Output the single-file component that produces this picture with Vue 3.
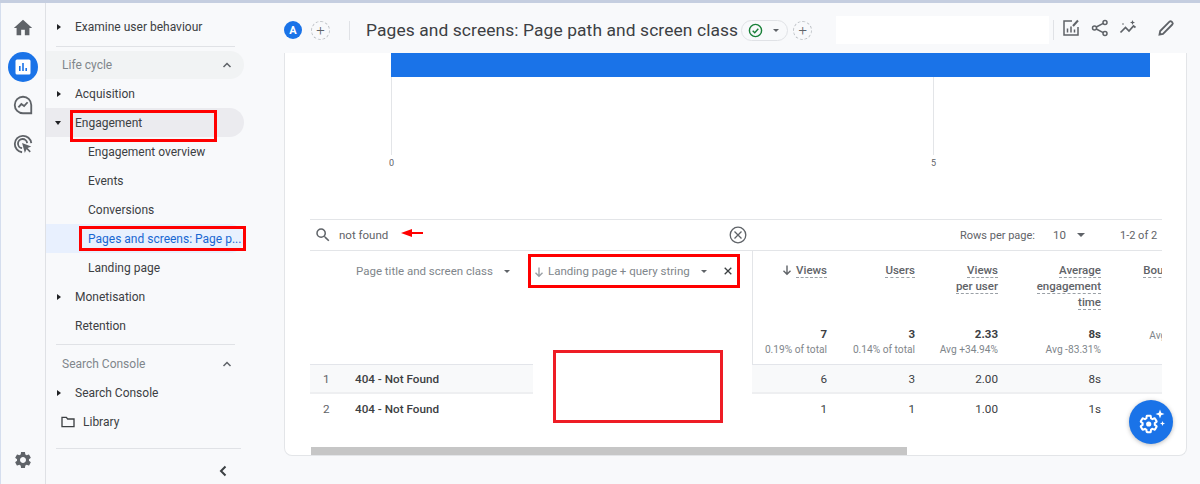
<script setup>
const menu = [
  { label: 'Acquisition', caret: 'right' },
  { label: 'Engagement', caret: 'down', open: true },
  { label: 'Engagement overview', sub: true },
  { label: 'Events', sub: true },
  { label: 'Conversions', sub: true },
  { label: 'Pages and screens: Page p...', sub: true, active: true },
  { label: 'Landing page', sub: true },
  { label: 'Monetisation', caret: 'right' },
  { label: 'Retention' }
]

const metrics = [
  { lines: ['Views'], sorted: true, total: '7', note: '0.19% of total' },
  { lines: ['Users'], total: '3', note: '0.14% of total' },
  { lines: ['Views', 'per user'], total: '2.33', note: 'Avg +34.94%' },
  { lines: ['Average', 'engagement', 'time'], total: '8s', note: 'Avg -83.31%' },
  { lines: ['Bounce'], total: '', note: 'Avg 0%' }
]

const rows = [
  { rank: 1, title: '404 - Not Found', values: ['6', '3', '2.00', '8s', ''] },
  { rank: 2, title: '404 - Not Found', values: ['1', '1', '1.00', '1s', ''] }
]

const gear = 'M19.14 12.94c.04-.3.06-.61.06-.94 0-.32-.02-.64-.07-.94l2.03-1.58c.18-.14.23-.41.12-.61l-1.92-3.32c-.12-.22-.37-.29-.59-.22l-2.39.96c-.5-.38-1.03-.7-1.62-.94l-.36-2.54c-.04-.24-.24-.41-.48-.41h-3.84c-.24 0-.43.17-.47.41l-.36 2.54c-.59.24-1.13.57-1.62.94l-2.39-.96c-.22-.08-.47 0-.59.22L2.74 8.87c-.12.21-.08.47.12.61l2.03 1.58c-.05.3-.09.63-.09.94s.02.64.07.94l-2.03 1.58c-.18.14-.23.41-.12.61l1.92 3.32c.12.22.37.29.59.22l2.39-.96c.5.38 1.03.7 1.62.94l.36 2.54c.05.24.24.41.48.41h3.84c.24 0 .44-.17.47-.41l.36-2.54c.59-.24 1.13-.56 1.62-.94l2.39.96c.22.08.47 0 .59-.22l1.92-3.32c.12-.22.07-.47-.12-.61l-2.01-1.58z'
</script>

<template>
  <div class="page">
    <div class="top-strip"></div>
    <div class="body">
      <aside class="rail">
        <svg class="rail-icon" viewBox="0 0 24 24"><path d="M10 20v-6h4v6h5v-8h3L12 3 2 12h3v8z" fill="#5f6368" /></svg>
        <div class="rail-active">
          <svg width="18" height="18" viewBox="0 0 18 18">
            <rect x="1.5" y="1.5" width="15" height="15" rx="1.5" fill="#fff" />
            <path d="M5 8h1.6v5H5zM8.2 5h1.6v8H8.2zM11.4 10H13v3h-1.6z" fill="#1a73e8" />
          </svg>
        </div>
        <svg class="rail-icon" viewBox="0 0 24 24" fill="none" stroke="#5f6368" stroke-width="2">
          <path d="M21 21h-9a9 9 0 1 1 9-9z" />
          <path d="M7 14.500l3.200-3.500 3 2.200L17 9" />
        </svg>
        <svg class="rail-icon" viewBox="0 0 24 24" fill="none" stroke="#5f6368" stroke-width="2">
          <path d="M11 21a9 9 0 1 1 10-10" />
          <path d="M11 16.500a5 5 0 1 1 5.500-5.500" />
          <path d="M11 11l10 3.600-4 1.800 3.500 3.600-1.200 1.200-3.500-3.500-1.800 4z" fill="#5f6368" stroke="none" />
        </svg>
        <svg class="rail-gear" viewBox="0 0 24 24"><path :d="gear + 'M12 15.6c-1.98 0-3.6-1.62-3.6-3.6s1.62-3.6 3.6-3.6 3.6 1.62 3.6 3.6-1.62 3.6-3.6 3.6z'" fill="#5f6368" fill-rule="evenodd" /></svg>
      </aside>

      <nav class="sidebar">
        <div class="item first"><span class="caret-right"></span><span>Examine user behaviour</span></div>
        <div class="rule"></div>
        <div class="section shaded">
          <span>Life cycle</span>
          <svg width="12" height="12" viewBox="0 0 12 12" fill="none" stroke="#5f6368" stroke-width="1.500"><path d="M2.500 8L6 4.500 9.500 8" /></svg>
        </div>
        <div
          v-for="m in menu"
          :key="m.label"
          class="item"
          :class="{ sub: m.sub, open: m.open, active: m.active }"
        >
          <span v-if="m.caret === 'right'" class="caret-right"></span>
          <span v-else-if="m.caret === 'down'" class="caret-down"></span>
          <span>{{ m.label }}</span>
        </div>
        <div class="rule lower"></div>
        <div class="section">
          <span>Search Console</span>
          <svg width="12" height="12" viewBox="0 0 12 12" fill="none" stroke="#5f6368" stroke-width="1.500"><path d="M2.500 8L6 4.500 9.500 8" /></svg>
        </div>
        <div class="item"><span class="caret-right"></span><span>Search Console</span></div>
        <div class="item library">
          <svg width="16" height="16" viewBox="0 0 24 24" fill="none" stroke="#3c4043" stroke-width="2"><path d="M3 5h6.500l2 2.500H21V19H3z" /></svg>
          <span>Library</span>
        </div>
        <div class="rule last"></div>
        <div class="collapse">
          <svg width="12" height="12" viewBox="0 0 12 12" fill="none" stroke="#3c4043" stroke-width="2"><path d="M8.500 1.500L4 6l4.500 4.500" /></svg>
        </div>
      </nav>

      <main class="main">
        <header class="header">
          <span class="avatar">A</span>
          <span class="add">+</span>
          <span class="sep"></span>
          <h1 class="title">Pages and screens: Page path and screen class</h1>
          <span class="chip">
            <svg width="15" height="15" viewBox="0 0 16 16" fill="none" stroke="#188038" stroke-width="1.500">
              <circle cx="8" cy="8" r="6.500" />
              <path d="M5 8.200l2.200 2.200L11 6.200" />
            </svg>
            <span class="mini-caret"></span>
          </span>
          <span class="add second">+</span>
          <span class="blank"></span>
          <span class="sep tight"></span>
          <div class="tools">
            <svg width="20" height="20" viewBox="0 0 20 20" fill="none" stroke="#5f6368" stroke-width="1.500">
              <path d="M11 3H3v14h14V9" />
              <path d="M6.500 14.500v-4M10 14.500v-6M13.500 14.500v-3" />
              <path d="M12 8l5-5.500" stroke-width="2" />
            </svg>
            <svg width="18" height="18" viewBox="0 0 18 18" fill="none" stroke="#5f6368" stroke-width="1.500">
              <circle cx="14" cy="3.500" r="2" />
              <circle cx="3.500" cy="9" r="2" />
              <circle cx="14" cy="14.500" r="2" />
              <path d="M5.300 8l6.900-3.600M5.300 10l6.900 3.600" />
            </svg>
            <svg width="20" height="20" viewBox="0 0 20 20" fill="none" stroke="#5f6368" stroke-width="1.700">
              <path d="M1.500 14.500l5-5 3.500 3.500 4.500-5 2 1.500" />
              <path d="M13.500 2l.7 1.800 1.800.7-1.800.7-.7 1.800-.7-1.800-1.800-.7 1.800-.7z" fill="#5f6368" stroke="none" />
              <circle cx="4" cy="6" r=".8" fill="#5f6368" stroke="none" />
            </svg>
            <svg class="pencil" width="18" height="18" viewBox="0 0 18 18" fill="none" stroke="#5f6368" stroke-width="1.800">
              <path d="M2.500 15.500l.7-3.500L12.500 2.700a1.500 1.500 0 0 1 2.100 0l.7.7a1.500 1.500 0 0 1 0 2.100L6 14.800z" />
            </svg>
          </div>
        </header>

        <section class="card">
          <div class="chart">
            <div class="bar"></div>
            <div class="ticks">
              <div class="tick wide"><span>0</span></div>
              <div class="tick"><span>5</span></div>
            </div>
          </div>

          <div class="search-bar">
            <svg width="18" height="18" viewBox="0 0 24 24"><path d="M15.500 14h-.79l-.28-.27A6.470 6.470 0 0 0 16 9.500 6.500 6.500 0 1 0 9.500 16c1.610 0 3.090-.59 4.230-1.570l.27.28v.79l5 4.990L20.490 19l-4.990-5zm-6 0C7.010 14 5 11.990 5 9.500S7.010 5 9.500 5 14 7.010 14 9.500 11.990 14 9.500 14z" fill="#5f6368" /></svg>
            <span class="query">not found</span>
            <svg class="clear" width="18" height="18" viewBox="0 0 18 18" fill="none" stroke="#5f6368" stroke-width="1.300">
              <circle cx="9" cy="9" r="7.800" />
              <path d="M5.500 5.500l7 7M12.500 5.500l-7 7" />
            </svg>
            <span class="rows-label">Rows per page:</span>
            <span class="rows-count">10</span>
            <span class="mini-caret wide-caret"></span>
            <span class="range">1-2 of 2</span>
          </div>

          <div class="table">
            <div class="grid head">
              <div></div>
              <div class="dim-head"><span>Page title and screen class</span><span class="mini-caret"></span></div>
              <div class="dim-head second-dim">
                <svg class="down-arrow" width="12" height="12" viewBox="0 0 12 12" fill="none" stroke="#9aa0a6" stroke-width="1.400"><path d="M6 1.500v8.500M2.500 6.800L6 10.300l3.500-3.500" /></svg>
                <span>Landing page + query string</span>
                <span class="mini-caret"></span>
                <svg class="close" width="8" height="8" viewBox="0 0 8 8" fill="none" stroke="#3c4043" stroke-width="1.300"><path d="M.7.7l6.600 6.600M7.300.7L.7 7.300" /></svg>
              </div>
              <div v-for="(m, i) in metrics" :key="i" class="metric-head" :class="{ divider: i === 0 }">
                <div class="metric-lines">
                  <svg v-if="m.sorted" class="sort" width="12" height="12" viewBox="0 0 12 12" fill="none" stroke="#5f6368" stroke-width="1.400"><path d="M6 1.500v8.500M2.500 6.800L6 10.300l3.500-3.500" /></svg>
                  <div>
                    <div v-for="line in m.lines" :key="line"><span class="dashed">{{ line }}</span></div>
                  </div>
                </div>
              </div>
            </div>
            <div class="grid totals">
              <div></div><div></div><div></div>
              <div v-for="(m, i) in metrics" :key="i" class="total" :class="{ divider: i === 0 }">
                <b>{{ m.total }}</b>
                <small>{{ m.note }}</small>
              </div>
            </div>
            <div v-for="(r, n) in rows" :key="r.rank" class="grid row" :class="{ striped: n === 0 }">
              <div class="rank">{{ r.rank }}</div>
              <div class="page-title">{{ r.title }}</div>
              <div class="masked"></div>
              <div v-for="(v, i) in r.values" :key="i" class="value">{{ v }}</div>
            </div>
          </div>

          <div class="scroll-track"><div class="scroll-thumb"></div></div>

          <button class="fab">
            <svg width="30" height="30" viewBox="0 0 30 30" fill="none">
              <g transform="translate(2.5 6.800) scale(.85)">
                <path :d="gear" stroke="#fff" stroke-width="2.400" />
              </g>
              <circle cx="12.700" cy="17" r="2.600" fill="#fff" />
              <path d="M24 2.500l1.200 3.300 3.300 1.200-3.300 1.200-1.200 3.300-1.200-3.300-3.300-1.200 3.300-1.200zM26.500 14l.7 1.800 1.800.7-1.800.7-.7 1.800-.7-1.800-1.800-.7 1.800-.7z" fill="#fff" />
            </svg>
          </button>
        </section>
      </main>
    </div>

    <!-- red annotations drawn over the screenshot -->
    <div class="mark mark-engagement"></div>
    <div class="mark mark-pages"></div>
    <div class="mark mark-landing"></div>
    <div class="mark mark-blank"></div>
    <svg class="mark-arrow" width="24" height="10" viewBox="0 0 24 10"><path d="M0 5l11-4v3h11v2H11v3z" fill="#ff0000" /></svg>
  </div>
</template>

<style scoped>
.page {
  position: relative;
  width: 1200px;
  height: 484px;
  overflow: hidden;
  background: #f8f9fb;
  font-family: Roboto, "Liberation Sans", sans-serif;
  color: #3c4043;
}

.top-strip {
  height: 3px;
  background: #c5cee0;
}

.body {
  display: flex;
  height: 481px;
}

.rail {
  width: 46px;
  flex: none;
  border-right: 1px solid #dfe1e5;
  border-left: 1px solid #d5deee;
  box-sizing: border-box;
  display: flex;
  flex-direction: column;
  align-items: center;
  padding-top: 10px;
  gap: 8.5px;
}

.rail-icon {
  width: 22px;
  height: 30px;
  flex: none;
}

.rail-active {
  width: 30px;
  height: 30px;
  border-radius: 50%;
  background: #1a73e8;
  display: flex;
  align-items: center;
  justify-content: center;
  flex: none;
}

.rail-gear {
  width: 20px;
  height: 20px;
  margin-top: auto;
  margin-bottom: 14px;
}

.sidebar {
  width: 238px;
  flex: none;
  font-size: 12px;
}

.item {
  height: 29px;
  display: flex;
  align-items: center;
  padding-left: 29px;
  width: 198px;
  box-sizing: border-box;
  border-radius: 0 15px 15px 0;
  white-space: nowrap;
  position: relative;
}

.item.first {
  margin-top: 9px;
}

.caret-right {
  position: absolute;
  left: 11px;
  width: 0;
  height: 0;
  border-left: 4px solid #202124;
  border-top: 3px solid transparent;
  border-bottom: 3px solid transparent;
}

.caret-down {
  position: absolute;
  left: 9px;
  width: 0;
  height: 0;
  border-top: 4px solid #202124;
  border-left: 3px solid transparent;
  border-right: 3px solid transparent;
}

.item.open {
  background: #ebebef;
}

.item.sub {
  padding-left: 42px;
}

.item.active {
  background: #e8f0fe;
  color: #1967d2;
}

.item.library {
  padding-left: 14px;
  gap: 7px;
}

.rule {
  height: 1px;
  width: 179px;
  background: #e0e2e6;
  margin: 5px 0 4px 10px;
}

.rule.lower {
  margin: 4px 0 4px 10px;
}

.rule.last {
  margin: 12px 0 0 10px;
  width: 185px;
}

.section {
  height: 29px;
  width: 198px;
  box-sizing: border-box;
  padding: 0 11px 0 16px;
  display: flex;
  align-items: center;
  justify-content: space-between;
  color: #80868b;
  border-radius: 0 15px 15px 0;
}

.section.shaded {
  height: 28px;
  background: #f1f3f4;
}

.collapse {
  height: 43px;
  width: 183px;
  display: flex;
  align-items: center;
  justify-content: flex-end;
}

.main {
  flex: 1;
  min-width: 0;
  display: flex;
  flex-direction: column;
}

.header {
  height: 50px;
  box-sizing: border-box;
  padding-top: 4px;
  flex: none;
  display: flex;
  align-items: center;
}

.avatar {
  width: 18px;
  height: 18px;
  border-radius: 50%;
  background: #1a73e8;
  color: #fff;
  font-size: 11px;
  font-weight: 700;
  display: flex;
  align-items: center;
  justify-content: center;
}

.add {
  width: 17px;
  height: 17px;
  margin-left: 9px;
  border: 1px dashed #bdc1c6;
  border-radius: 50%;
  display: flex;
  align-items: center;
  justify-content: center;
  font-size: 15px;
  line-height: 1;
  color: #5f6368;
  font-weight: 300;
}

.add.second {
  margin-left: 5px;
}

.sep {
  width: 1px;
  height: 19px;
  margin-left: 19px;
  background: #e0e2e6;
}

.sep.tight {
  height: 20px;
  margin-left: 4px;
}

.title {
  margin: 0 0 0 16px;
  font-size: 17.4px;
  font-weight: 400;
  letter-spacing: 0.1px;
  color: #3c4043;
  white-space: nowrap;
}

.chip {
  width: 47px;
  height: 21px;
  margin-left: 3px;
  box-sizing: border-box;
  border: 1px solid #e0e2e6;
  border-radius: 11px;
  display: flex;
  align-items: center;
  padding-left: 6px;
  gap: 10px;
}

.mini-caret {
  width: 0;
  height: 0;
  flex: none;
  border-top: 3px solid #5f6368;
  border-left: 3px solid transparent;
  border-right: 3px solid transparent;
}

.blank {
  width: 213px;
  height: 28px;
  margin-left: 24px;
  background: #fff;
}

.tools {
  display: flex;
  align-items: center;
  margin-left: 7px;
  margin-top: -4px;
  gap: 10px;
}

.pencil {
  margin-left: 8px;
}

.card {
  position: relative;
  flex: 1;
  margin-right: 13px;
  margin-bottom: 28px;
  background: #fff;
  border: 1px solid #e3e5e8;
  border-top: none;
  border-radius: 0 0 8px 8px;
  padding: 0 25px;
  display: flex;
  flex-direction: column;
  min-height: 0;
}

.chart {
  height: 166px;
  flex: none;
  padding-left: 81px;
  font-size: 9px;
  color: #5f6368;
}

.bar {
  width: 759px;
  height: 24px;
  background: #1a73e8;
}

.ticks {
  display: flex;
  height: 78px;
}

.tick {
  width: 200px;
  border-left: 1px solid #e3e5e8;
  height: 78px;
  position: relative;
}

.tick.wide {
  width: 541px;
}

.tick span {
  position: absolute;
  left: -3px;
  top: 81px;
}

.search-bar {
  height: 30px;
  flex: none;
  border-top: 1px solid #e3e5e8;
  border-bottom: 1px solid #e3e5e8;
  display: flex;
  align-items: center;
  font-size: 11.5px;
  color: #5f6368;
  padding-left: 4px;
  width: 848px;
}

.query {
  margin-left: 7px;
  width: 390px;
}

.clear {
  flex: none;
}

.rows-label {
  margin-left: 213px;
  font-size: 11px;
}

.rows-count {
  margin-left: 18px;
}

.wide-caret {
  margin-left: 11px;
  border-top-width: 4px;
  border-left-width: 4px;
  border-right-width: 4px;
}

.range {
  margin-left: 35px;
  font-size: 11px;
  white-space: nowrap;
}

.table {
  width: 852px;
  overflow: hidden;
  flex: none;
}

.grid {
  display: grid;
  grid-template-columns: 45px 178px 219px 75px 88px 83px 103px 81px;
}

.head {
  height: 69px;
  font-size: 11.5px;
}

.dim-head {
  padding-top: 13px;
  display: flex;
  align-items: flex-start;
  color: #80868b;
  white-space: nowrap;
  line-height: 14px;
  gap: 11px;
  padding-left: 1px;
}

.dim-head .mini-caret {
  margin-top: 6px;
}

.second-dim {
  padding-left: 0;
  gap: 0;
}

.down-arrow {
  width: 12px;
  margin-top: 2px;
  margin-right: 3px;
  flex: none;
}

.second-dim .mini-caret {
  margin-left: 11px;
}

.close {
  margin-left: 17px;
  margin-top: 3px;
  flex: none;
}

.metric-head {
  padding-top: 11px;
  color: #5f6368;
  font-weight: 500;
  line-height: 16px;
  text-align: right;
  white-space: nowrap;
}

.metric-lines {
  display: flex;
  justify-content: flex-end;
  align-items: flex-start;
  gap: 3px;
}

.sort {
  margin-top: 2px;
}

.dashed {
  border-bottom: 1px dashed #9aa0a6;
}

.divider {
  border-left: 1px solid #e3e5e8;
}

.totals {
  height: 44px;
}

.total {
  text-align: right;
  white-space: nowrap;
  padding-top: 7px;
}

.total b {
  display: block;
  font-size: 11.5px;
  font-weight: 700;
  line-height: 14px;
  color: #3c4043;
}

.total small {
  display: block;
  margin-top: 3px;
  font-size: 10.2px;
  color: #80868b;
}

.row {
  height: 30px;
  align-items: center;
  font-size: 11.7px;
}

.striped {
  background: #f8f9fa;
  border-top: 1px solid #e3e5ea;
  border-bottom: 2px solid #eeeff1;
  box-sizing: border-box;
}

.rank {
  padding-left: 13px;
  color: #5f6368;
}

.page-title {
  font-weight: 500;
  color: #3c4043;
}

.masked {
  align-self: stretch;
  margin: -1px 0 -2px;
  background: #fff;
}

.value {
  text-align: right;
  color: #3c4043;
}

.scroll-track {
  margin-top: auto;
  margin-right: -25px;
  margin-left: 1px;
  height: 8px;
  flex: none;
}

.scroll-thumb {
  width: 596px;
  height: 8px;
  background: #c6c6c6;
}

.fab {
  position: absolute;
  right: 13px;
  bottom: 11px;
  width: 44px;
  height: 44px;
  padding: 0;
  border: none;
  border-radius: 50%;
  background: #1a73e8;
  box-shadow: 0 1px 4px rgba(60, 64, 67, 0.35);
  display: flex;
  align-items: center;
  justify-content: center;
}

.mark {
  position: absolute;
  box-sizing: border-box;
  border: 3px solid #ff0000;
}

.mark-engagement {
  left: 70px;
  top: 110px;
  width: 147px;
  height: 32px;
}

.mark-pages {
  left: 79px;
  top: 226px;
  width: 167px;
  height: 25px;
}

.mark-landing {
  left: 528px;
  top: 254px;
  width: 212px;
  height: 34px;
}

.mark-blank {
  left: 553px;
  top: 350px;
  width: 170px;
  height: 73px;
  border-color: #ee1c25;
  background: #fff;
}

.mark-arrow {
  position: absolute;
  left: 401px;
  top: 228px;
}
</style>
